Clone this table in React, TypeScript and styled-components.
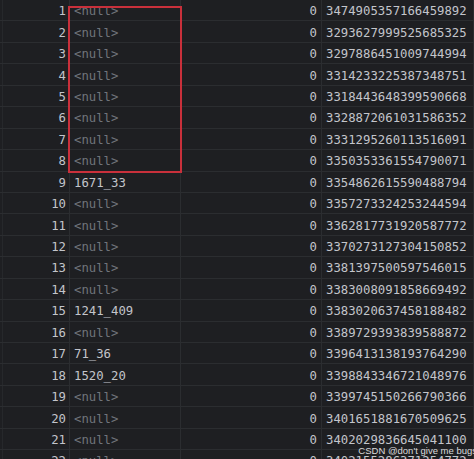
import React from 'react';
import styled, { createGlobalStyle } from 'styled-components';

const GlobalStyle = createGlobalStyle`
  html, body {
    margin: 0;
    padding: 0;
    background: #1e1f22;
    overflow: hidden;
  }
`;

type RowData = { id: number; name: string | null; flag: string; value: string };

const rows: RowData[] = [
  { id: 1, name: null, flag: '0', value: '3474905357166459892' },
  { id: 2, name: null, flag: '0', value: '3293627999525685325' },
  { id: 3, name: null, flag: '0', value: '3297886451009744994' },
  { id: 4, name: null, flag: '0', value: '3314233225387348751' },
  { id: 5, name: null, flag: '0', value: '3318443648399590668' },
  { id: 6, name: null, flag: '0', value: '3328872061031586352' },
  { id: 7, name: null, flag: '0', value: '3331295260113516091' },
  { id: 8, name: null, flag: '0', value: '3350353361554790071' },
  { id: 9, name: '1671_33', flag: '0', value: '3354862615590488794' },
  { id: 10, name: null, flag: '0', value: '3357273324253244594' },
  { id: 11, name: null, flag: '0', value: '3362817731920587772' },
  { id: 12, name: null, flag: '0', value: '3370273127304150852' },
  { id: 13, name: null, flag: '0', value: '3381397500597546015' },
  { id: 14, name: null, flag: '0', value: '3383008091858669492' },
  { id: 15, name: '1241_409', flag: '0', value: '3383020637458188482' },
  { id: 16, name: null, flag: '0', value: '3389729393839588872' },
  { id: 17, name: '71_36', flag: '0', value: '3396413138193764290' },
  { id: 18, name: '1520_20', flag: '0', value: '3398843346721048976' },
  { id: 19, name: null, flag: '0', value: '3399745150266790366' },
  { id: 20, name: null, flag: '0', value: '3401651881670509625' },
  { id: 21, name: null, flag: '0', value: '3402029836645041100' },
  { id: 22, name: null, flag: '0', value: '3402155286371254772' },
];

const Page = styled.div`
  position: relative;
  width: 474px;
  height: 459px;
  overflow: hidden;
  background: #1e1f22;
  font-family: "DejaVu Sans Mono", "Liberation Mono", monospace;
  font-size: 12.3px;
  color: #c3c5cb;
`;

const Table = styled.div`
  display: flex;
  flex-direction: column;
`;

const Row = styled.div`
  display: grid;
  grid-template-columns: 3px 67px 111px 141px 1fr;
  height: 21.45px;
  box-sizing: border-box;
  border-bottom: 1px solid #2b2d30;
`;

const Cell = styled.div<{ $align?: 'left' | 'right'; $muted?: boolean }>`
  display: flex;
  align-items: center;
  justify-content: ${p => (p.$align === 'right' ? 'flex-end' : 'flex-start')};
  padding: 2px 4px 0 4px;
  border-right: 1px solid #2b2d30;
  white-space: nowrap;
  overflow: hidden;
  color: ${p => (p.$muted ? '#70747b' : '#c3c5cb')};
`;

const Gutter = styled.div`
  border-right: 1px solid #26282b;
`;

const NumCell = styled(Cell)`
  padding-right: 3px;
`;

const Highlight = styled.div`
  position: absolute;
  left: 68px;
  top: 6px;
  width: 114px;
  height: 167px;
  box-sizing: border-box;
  border: 2px solid #c9303b;
  pointer-events: none;
`;

const Watermark = styled.div`
  position: absolute;
  right: -3px;
  bottom: 3px;
  font-family: "Liberation Sans", Arial, sans-serif;
  font-size: 9.5px;
  color: rgba(240, 240, 240, 0.9);
  white-space: nowrap;
`;

const App: React.FC = () => {
  return (
    <Page>
      <GlobalStyle />
      <Table>
        {rows.map(r => (
          <Row key={r.id}>
            <Gutter />
            <NumCell $align="right">{r.id}</NumCell>
            <Cell $muted={r.name === null}>{r.name ?? '<null>'}</Cell>
            <Cell $align="right">{r.flag}</Cell>
            <Cell>{r.value}</Cell>
          </Row>
        ))}
      </Table>
      <Highlight />
      <Watermark>CSDN @don't give me bugs</Watermark>
    </Page>
  );
};

export default App;
